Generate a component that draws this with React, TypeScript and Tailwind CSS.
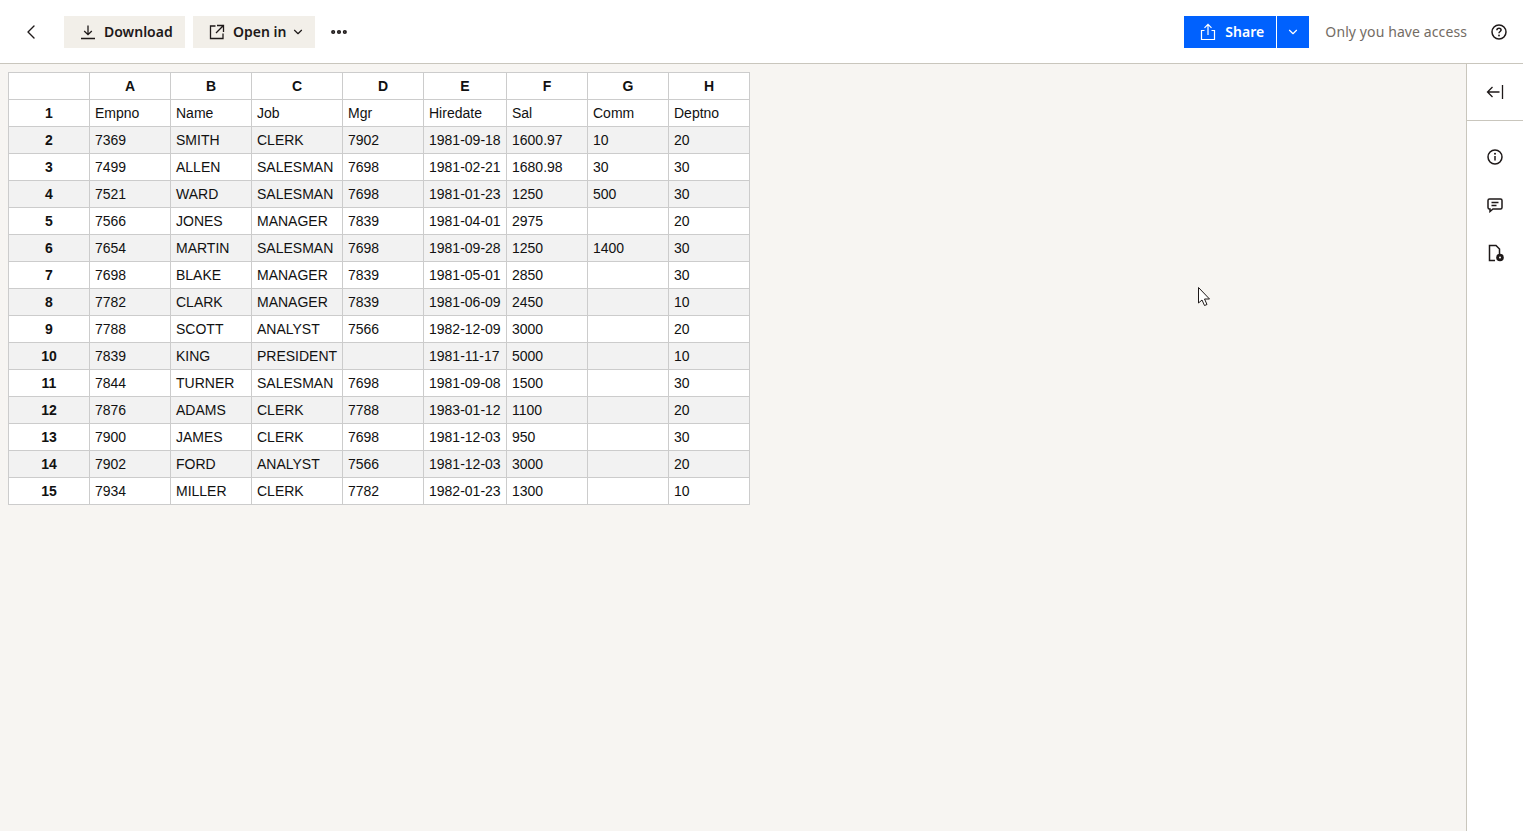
import { ChevronDown, ChevronLeft, Ellipsis } from "lucide-react";

const columns = [
  { name: "A", width: "w-[81px]" },
  { name: "B", width: "w-[81px]" },
  { name: "C", width: "w-[91px]" },
  { name: "D", width: "w-[81px]" },
  { name: "E", width: "w-[83px]" },
  { name: "F", width: "w-[81px]" },
  { name: "G", width: "w-[81px]" },
  { name: "H", width: "w-[81px]" },
];

const rows = [
  ["Empno", "Name", "Job", "Mgr", "Hiredate", "Sal", "Comm", "Deptno"],
  ["7369", "SMITH", "CLERK", "7902", "1981-09-18", "1600.97", "10", "20"],
  ["7499", "ALLEN", "SALESMAN", "7698", "1981-02-21", "1680.98", "30", "30"],
  ["7521", "WARD", "SALESMAN", "7698", "1981-01-23", "1250", "500", "30"],
  ["7566", "JONES", "MANAGER", "7839", "1981-04-01", "2975", "", "20"],
  ["7654", "MARTIN", "SALESMAN", "7698", "1981-09-28", "1250", "1400", "30"],
  ["7698", "BLAKE", "MANAGER", "7839", "1981-05-01", "2850", "", "30"],
  ["7782", "CLARK", "MANAGER", "7839", "1981-06-09", "2450", "", "10"],
  ["7788", "SCOTT", "ANALYST", "7566", "1982-12-09", "3000", "", "20"],
  ["7839", "KING", "PRESIDENT", "", "1981-11-17", "5000", "", "10"],
  ["7844", "TURNER", "SALESMAN", "7698", "1981-09-08", "1500", "", "30"],
  ["7876", "ADAMS", "CLERK", "7788", "1983-01-12", "1100", "", "20"],
  ["7900", "JAMES", "CLERK", "7698", "1981-12-03", "950", "", "30"],
  ["7902", "FORD", "ANALYST", "7566", "1981-12-03", "3000", "", "20"],
  ["7934", "MILLER", "CLERK", "7782", "1982-01-23", "1300", "", "10"],
];

const uiFont = "font-['Noto_Sans',sans-serif]";

const App = () => {
  return (
    <div className={`flex h-[831px] w-[1523px] flex-col overflow-hidden bg-white ${uiFont}`}>
      <header className="flex h-16 shrink-0 items-center border-b border-[#c9c6bd] bg-white">
        <button className="ml-[19px] flex h-6 w-6 items-center justify-center text-[#1e1919]">
          <ChevronLeft size={24} strokeWidth={1.4} />
        </button>
        <button className="ml-[21px] flex h-8 w-[121px] items-center bg-[#f2efe9] pl-4 text-sm font-semibold text-[#1e1919]">
          <svg width="16" height="16" viewBox="0 0 16 16" fill="none" stroke="currentColor" strokeWidth="1.3" className="mr-2">
            <path d="M8 1.5v9M4.2 7 8 10.7 11.8 7M1 14.5h14" />
          </svg>
          Download
        </button>
        <button className="ml-2 flex h-8 w-[122px] items-center bg-[#f2efe9] pl-4 text-sm font-semibold text-[#1e1919]">
          <svg width="16" height="16" viewBox="0 0 16 16" fill="none" stroke="currentColor" strokeWidth="1.3" className="mr-2">
            <path d="M6.5 2H1.5v12.5h12.5V9.5M8 1.5h6.500V8M14.200 1.800 7 9" />
          </svg>
          Open in
          <ChevronDown size={14} strokeWidth={2} className="ml-[5px]" />
        </button>
        <button className="ml-3 flex h-6 w-6 items-center justify-center text-[#1e1919]">
          <Ellipsis size={20} strokeWidth={3} />
        </button>

        <div className="ml-auto flex items-center">
          <button className="flex h-8 w-[92px] items-center bg-[#0061fe] pl-4 text-sm font-semibold text-white">
            <svg width="16" height="18" viewBox="0 0 16 18" fill="none" stroke="currentColor" strokeWidth="1.2" className="mr-[9px]">
              <path d="M8 12V1.500M4.500 4.800 8 1.300l3.500 3.500M4.500 7.500H1.500v9h13v-9h-3" />
            </svg>
            Share
          </button>
          <button className="ml-px flex h-8 w-8 items-center justify-center bg-[#0061fe] text-white">
            <ChevronDown size={14} strokeWidth={2} />
          </button>
          <span className="ml-4 text-sm tracking-[0.1px] text-[#736c64]">Only you have access</span>
          <button className="ml-6 mr-4 flex h-4 w-4 items-center justify-center text-[#1e1919]">
            <svg width="16" height="16" viewBox="0 0 16 16" fill="none" stroke="currentColor" strokeWidth="1.5">
              <circle cx="8" cy="8" r="7" />
              <path d="M5.900 6.200C5.900 5 6.900 4.200 8 4.200s2.100.8 2.100 1.900C10.100 7.500 8 7.500 8 9.200" />
              <circle cx="8" cy="11.500" r=".9" fill="currentColor" stroke="none" />
            </svg>
          </button>
        </div>
      </header>

      <div className="flex min-h-0 flex-1">
        <main className="relative flex-1 bg-[#f7f5f2] pl-2 pt-2">
          <table className="w-[742px] table-fixed border-collapse bg-white font-['Liberation_Sans',sans-serif] text-sm text-[#111111]">
            <colgroup>
              <col className="w-[81px]" />
              {columns.map((col) => (
                <col key={col.name} className={col.width} />
              ))}
            </colgroup>
            <thead>
              <tr className="h-[27px]">
                <th className="border border-[#cccccc]" />
                {columns.map((col) => (
                  <th key={col.name} className="border border-[#cccccc] px-[5px] text-center font-bold">
                    {col.name}
                  </th>
                ))}
              </tr>
            </thead>
            <tbody>
              {rows.map((row, i) => (
                <tr key={i} className={`h-[27px] ${i % 2 === 1 ? "bg-[#f2f2f2]" : "bg-white"}`}>
                  <td className="border border-[#cccccc] px-[5px] text-center font-bold">{i + 1}</td>
                  {row.map((cell, j) => (
                    <td key={j} className="whitespace-nowrap border border-[#cccccc] px-[5px]">
                      {cell}
                    </td>
                  ))}
                </tr>
              ))}
            </tbody>
          </table>

          {/* mouse pointer caught in the screenshot */}
          <svg width="14" height="21" viewBox="0 0 14 21" className="absolute left-[1197px] top-[222px]" fill="#ffffff" stroke="#1e1919" strokeWidth="1">
            <path d="M1.500 1.500v15.500l3.500-3 2.500 5.500 2.500-1-2.500-5.500h5z" />
          </svg>
        </main>

        <aside className="flex w-[57px] shrink-0 flex-col border-l border-[#c9c6bd] bg-white text-[#1e1919]">
          <div className="flex h-[57px] items-center justify-center border-b border-[#c9c6bd] pb-px">
            <svg width="18" height="16" viewBox="0 0 18 16" fill="none" stroke="currentColor" strokeWidth="1.300">
              <path d="M16.500 1v14M13.500 8H1.500M6.500 3 1.500 8l5 5" />
            </svg>
          </div>
          <div className="flex flex-col items-center gap-8 pt-7">
            <svg width="16" height="16" viewBox="0 0 16 16" fill="none" stroke="currentColor" strokeWidth="1.500">
              <circle cx="8" cy="8" r="7" />
              <path d="M8 7v4.500" />
              <circle cx="8" cy="4.800" r="1" fill="currentColor" stroke="none" />
            </svg>
            <svg width="16" height="16" viewBox="0 0 16 16" fill="none" stroke="currentColor" strokeWidth="1.500">
              <path d="M2.500 2h11A1.500 1.500 0 0 1 15 3.500v7a1.500 1.500 0 0 1-1.500 1.500H6l-3 2.500V12h-.5A1.500 1.500 0 0 1 1 10.500v-7A1.500 1.500 0 0 1 2.500 2z" />
              <path d="M4.500 5.500h7M4.500 8.500h5" />
            </svg>
            <svg width="16" height="18" viewBox="0 0 16 18" fill="none" stroke="currentColor" strokeWidth="1.500" className="-mt-px ml-px">
              <path d="M7 16.500H1.500v-15h6.500l3.500 3.500v5" />
              <circle cx="12" cy="13.500" r="3.800" fill="currentColor" stroke="none" />
              <circle cx="12" cy="13.500" r="1" fill="#ffffff" stroke="none" />
            </svg>
          </div>
        </aside>
      </div>
    </div>
  );
};

export default App;
